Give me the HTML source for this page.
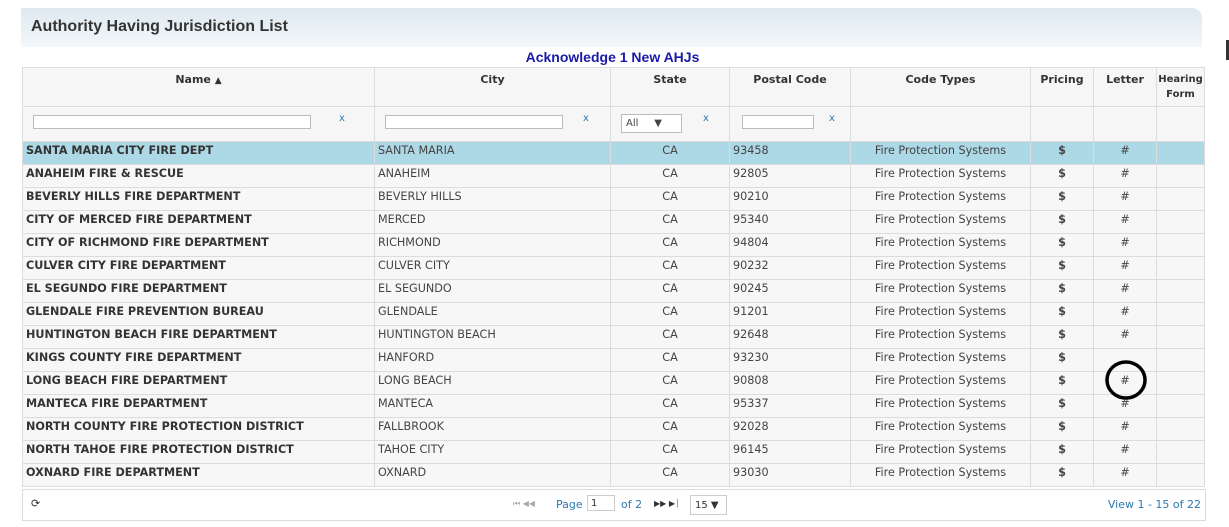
<!DOCTYPE html><html><head><style>
body{margin:0;width:1229px;height:527px;background:#fff;font-family:"DejaVu Sans",Verdana,sans-serif;position:relative;overflow:hidden}
.title{position:absolute;left:21px;top:8px;width:1181px;height:39px;border-radius:0 10px 0 0;background:linear-gradient(#dde9f0,#f3f7fa);}
.title span{position:absolute;left:10px;top:10px;font:bold 16px "Liberation Sans",Arial,sans-serif;color:#333}
.ack{position:absolute;left:0;width:1229px;top:49px;text-align:center;font:bold 14px "Liberation Sans",Arial,sans-serif;color:#1a1aa8}
.ack span{position:relative;left:-2px}
table{position:absolute;left:22px;top:67px;border-collapse:collapse;table-layout:fixed;width:1182px;font-size:11.2px;color:#444}
td,th{border:1px solid #dcdcdc;padding:0 3px;overflow:hidden;white-space:nowrap;box-sizing:border-box}
th{height:39px;vertical-align:top;padding-top:4px;font-size:11px;color:#333;background:#f6f6f6;font-weight:bold;white-space:normal;line-height:15px}
tr.f td{height:35px;background:#f6f6f6;position:relative}
tr.d td{height:23px;background:#f7f7f7;line-height:14px;vertical-align:top;padding-top:2px}
tr.sel td{background:#add8e6}
td.n{font-weight:bold;color:#333}
td.c{text-align:center}
.inp{position:absolute;height:12px;border:1px solid #bbb;background:#fff;top:8px}
.x{position:absolute;top:6px;color:#2a7ab0;font-size:10px}
.pager{position:absolute;left:22px;top:489px;width:1182px;height:30px;border:1px solid #dcdcdc;background:#fff;font-size:11px;color:#2a7ab0}
</style></head><body>
<div class="title"><span>Authority Having Jurisdiction List</span></div>
<div class="ack"><span>Acknowledge 1 New AHJs</span></div>
<table>
<colgroup><col style="width:352px"><col style="width:236px"><col style="width:119px"><col style="width:121px"><col style="width:180px"><col style="width:63px"><col style="width:63px"><col style="width:48px"></colgroup>
<tr><th>Name <span style="font-size:9px">▲</span></th><th>City</th><th>State</th><th>Postal Code</th><th>Code Types</th><th>Pricing</th><th>Letter</th><th style="font-size:10px;padding:4px 0 0">Hearing Form</th></tr>
<tr class="f"><td><div class="inp" style="left:10px;width:276px"></div><span class="x" style="left:316px">x</span></td><td><div class="inp" style="left:10px;width:176px"></div><span class="x" style="left:208px">x</span></td><td><div class="inp" style="left:10px;font-size:10px;line-height:17px;padding-left:4px;box-sizing:border-box;width:61px;height:19px;top:7px">All &nbsp;&nbsp;&nbsp;&nbsp;▼</div><span class="x" style="left:92px">x</span></td><td><div class="inp" style="left:12px;width:70px"></div><span class="x" style="left:99px">x</span></td><td></td><td></td><td></td><td></td></tr>
<tr class="d sel"><td class="n">SANTA MARIA CITY FIRE DEPT</td><td>SANTA MARIA</td><td class="c">CA</td><td>93458</td><td class="c">Fire Protection Systems</td><td class="c"><b>$</b></td><td class="c">#</td><td></td></tr>
<tr class="d"><td class="n">ANAHEIM FIRE &amp; RESCUE</td><td>ANAHEIM</td><td class="c">CA</td><td>92805</td><td class="c">Fire Protection Systems</td><td class="c"><b>$</b></td><td class="c">#</td><td></td></tr>
<tr class="d"><td class="n">BEVERLY HILLS FIRE DEPARTMENT</td><td>BEVERLY HILLS</td><td class="c">CA</td><td>90210</td><td class="c">Fire Protection Systems</td><td class="c"><b>$</b></td><td class="c">#</td><td></td></tr>
<tr class="d"><td class="n">CITY OF MERCED FIRE DEPARTMENT</td><td>MERCED</td><td class="c">CA</td><td>95340</td><td class="c">Fire Protection Systems</td><td class="c"><b>$</b></td><td class="c">#</td><td></td></tr>
<tr class="d"><td class="n">CITY OF RICHMOND FIRE DEPARTMENT</td><td>RICHMOND</td><td class="c">CA</td><td>94804</td><td class="c">Fire Protection Systems</td><td class="c"><b>$</b></td><td class="c">#</td><td></td></tr>
<tr class="d"><td class="n">CULVER CITY FIRE DEPARTMENT</td><td>CULVER CITY</td><td class="c">CA</td><td>90232</td><td class="c">Fire Protection Systems</td><td class="c"><b>$</b></td><td class="c">#</td><td></td></tr>
<tr class="d"><td class="n">EL SEGUNDO FIRE DEPARTMENT</td><td>EL SEGUNDO</td><td class="c">CA</td><td>90245</td><td class="c">Fire Protection Systems</td><td class="c"><b>$</b></td><td class="c">#</td><td></td></tr>
<tr class="d"><td class="n">GLENDALE FIRE PREVENTION BUREAU</td><td>GLENDALE</td><td class="c">CA</td><td>91201</td><td class="c">Fire Protection Systems</td><td class="c"><b>$</b></td><td class="c">#</td><td></td></tr>
<tr class="d"><td class="n">HUNTINGTON BEACH FIRE DEPARTMENT</td><td>HUNTINGTON BEACH</td><td class="c">CA</td><td>92648</td><td class="c">Fire Protection Systems</td><td class="c"><b>$</b></td><td class="c">#</td><td></td></tr>
<tr class="d"><td class="n">KINGS COUNTY FIRE DEPARTMENT</td><td>HANFORD</td><td class="c">CA</td><td>93230</td><td class="c">Fire Protection Systems</td><td class="c"><b>$</b></td><td class="c"></td><td></td></tr>
<tr class="d"><td class="n">LONG BEACH FIRE DEPARTMENT</td><td>LONG BEACH</td><td class="c">CA</td><td>90808</td><td class="c">Fire Protection Systems</td><td class="c"><b>$</b></td><td class="c">#</td><td></td></tr>
<tr class="d"><td class="n">MANTECA FIRE DEPARTMENT</td><td>MANTECA</td><td class="c">CA</td><td>95337</td><td class="c">Fire Protection Systems</td><td class="c"><b>$</b></td><td class="c">#</td><td></td></tr>
<tr class="d"><td class="n">NORTH COUNTY FIRE PROTECTION DISTRICT</td><td>FALLBROOK</td><td class="c">CA</td><td>92028</td><td class="c">Fire Protection Systems</td><td class="c"><b>$</b></td><td class="c">#</td><td></td></tr>
<tr class="d"><td class="n">NORTH TAHOE FIRE PROTECTION DISTRICT</td><td>TAHOE CITY</td><td class="c">CA</td><td>96145</td><td class="c">Fire Protection Systems</td><td class="c"><b>$</b></td><td class="c">#</td><td></td></tr>
<tr class="d"><td class="n">OXNARD FIRE DEPARTMENT</td><td>OXNARD</td><td class="c">CA</td><td>93030</td><td class="c">Fire Protection Systems</td><td class="c"><b>$</b></td><td class="c">#</td><td></td></tr>
</table>
<svg style="position:absolute;left:1100px;top:357px" width="52" height="48"><ellipse cx="26" cy="23" rx="19" ry="18" fill="none" stroke="#000" stroke-width="3.5"/></svg>
<div class="pager">
<span style="position:absolute;left:8px;top:7px;color:#333">⟳</span>
<span style="position:absolute;left:490px;top:9px;color:#aaa;font-size:8px">⏮ ◀◀</span>
<span style="position:absolute;left:533px;top:8px">Page</span>
<span style="position:absolute;left:564px;top:5px;width:28px;height:16px;border:1px solid #ccc;color:#333;font-size:10px;line-height:16px;padding-left:3px;box-sizing:border-box">1</span>
<span style="position:absolute;left:598px;top:8px">of 2</span>
<span style="position:absolute;left:631px;top:9px;color:#333;font-size:8px">▶▶ ▶⏐</span>
<span style="position:absolute;left:667px;top:5px;width:37px;height:20px;border:1px solid #ccc;color:#333;font-size:10px;line-height:20px;padding-left:4px;box-sizing:border-box">15 ▼</span>
<span style="position:absolute;right:4px;top:8px">View 1 - 15 of 22</span>
</div>
<div style="position:absolute;left:1226px;top:40px;width:3px;height:20px;background:#333"></div>
</body></html>
